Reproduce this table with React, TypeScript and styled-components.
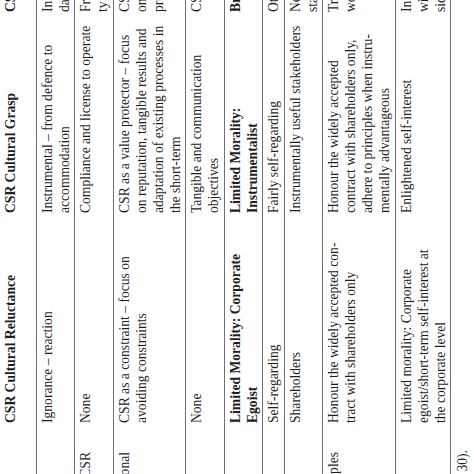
import React from 'react'
import styled, { createGlobalStyle } from 'styled-components'

const GlobalStyle = createGlobalStyle`
    html, body {
        margin: 0;
        padding: 0;
        background: #fff;
    }
`;
const Frame = styled.div`
    width: 474px;
    height: 474px;
    overflow: hidden;
    background: #fff;
`;
// the page is a scan of a table printed sideways
const Sheet = styled.div`
    width: 474px;
    height: 474px;
    transform: rotate(-90deg);
    font-family: "Liberation Serif", "Times New Roman", serif;
    font-size: 13.6px;
    color: #1e1e1e;
`;
const Table = styled.div`
    margin-left: -120px;
    width: 820px;
`;
const Row = styled.div<{ $head?: boolean }>`
    display: grid;
    grid-template-columns: 171px 210px 201px 238px;
    border-bottom: 1px solid #707070;
    height: ${p => p.$head ? '33.5px' : 'auto'};
    padding-top: ${p => p.$head ? '2px' : '0'};
    box-sizing: content-box;
`;
const Cell = styled.div<{ $bold?: boolean; $label?: boolean }>`
    padding: 2px ${p => p.$label ? '29px' : '0'} 1.5px 0;
    line-height: 17px;
    white-space: pre;
    font-weight: ${p => p.$bold ? 700 : 400};
    text-align: ${p => p.$label ? 'right' : 'left'};
    overflow: hidden;
`;
const HeadCell = styled(Cell)`
    padding-top: 0;
    font-weight: 700;
`;
const Caption = styled.div`
    margin-left: -300px;
    width: 324px;
    text-align: right;
    padding-top: 3px;
    line-height: 17px;
    white-space: nowrap;
`;

type RowData = { label: string; cells: string[]; bold?: boolean }

const head = ['CSR Cultural Reluctance', 'CSR Cultural Grasp', 'CSR Cultural Embedment']

const rows: RowData[] = [
    { label: '', cells: ['Ignorance – reaction', 'Instrumental – from defence to\naccommodation', 'In tune – from proactive to\ndaily integration'] },
    { label: 'Rationale for CSR', cells: ['None', 'Compliance and license to operate', 'Freedom and responsibility to socie-\nty'] },
    { label: 'Organisational', cells: ['CSR as a constraint – focus on\navoiding constraints', 'CSR as a value protector – focus\non reputation, tangible results and\nadaptation of existing processes in\nthe short-term', 'CSR as a value creator – focus\non long-term innovation and\nprocesses'] },
    { label: '', cells: ['None', 'Tangible and communication\nobjectives', 'CSR embedded in corporate goals'] },
    { label: '', bold: true, cells: ['Limited Morality: Corporate\nEgoist', 'Limited Morality:\nInstrumentalist', 'Broad Morality: Citizen'] },
    { label: '', cells: ['Self-regarding', 'Fairly self-regarding', 'Other-regarding'] },
    { label: '', cells: ['Shareholders', 'Instrumentally useful stakeholders', 'Necessary and all\nstakeholders'] },
    { label: 'Principles', cells: ['Honour the widely accepted con-\ntract with shareholders only', 'Honour the widely accepted\ncontract with shareholders only,\nadhere to principles when instru-\nmentally advantageous', 'Transcend the contract,\nwork with society'] },
    { label: '', cells: ['Limited morality: Corporate\negoist/short-term self-interest at\nthe corporate level', 'Enlightened self-interest', 'In the interest of\nwider society,\nside by side'] },
]

const App = () => {
    return (
        <Frame>
            <GlobalStyle />
            <Sheet>
                <Table>
                    <Row $head>
                        <HeadCell $label></HeadCell>
                        {head.map(h => <HeadCell key={h}>{h}</HeadCell>)}
                    </Row>
                    {rows.map((r, i) => (
                        <Row key={i}>
                            <Cell $label>{r.label}</Cell>
                            {r.cells.map((c, j) => (
                                <Cell key={j} $bold={r.bold}>{c}</Cell>
                            ))}
                        </Row>
                    ))}
                </Table>
                <Caption>Source: Maon et al. (2010, p. 30).</Caption>
            </Sheet>
        </Frame>
    )
}

export default App
